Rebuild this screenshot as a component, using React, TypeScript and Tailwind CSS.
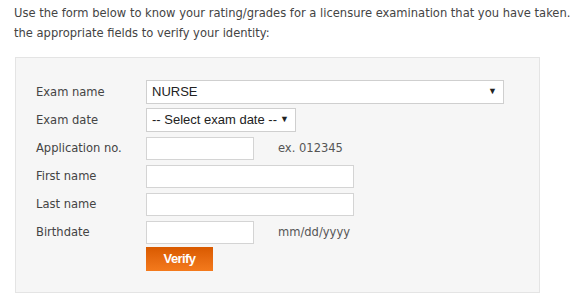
import React from "react";

const Row = ({ label, children }: { label: string; children: React.ReactNode }) => (
  <div className="flex items-center h-[28px]">
    <div className="w-[110px] text-[#444]">{label}</div>
    {children}
  </div>
);

export default function App() {
  return (
    <div className="w-[576px] h-[303px] bg-white overflow-hidden font-['DejaVu_Sans',sans-serif] font-stretch-condensed text-[12.8px] text-[#444]">
      <div className="pl-[14px] pt-[3px] leading-[20px] whitespace-nowrap">
        <div>Use the form below to know your rating/grades for a licensure examination that you have taken.</div>
        <div>the appropriate fields to verify your identity:</div>
      </div>
      <div className="ml-[15px] mt-[14px] w-[525px] h-[236px] bg-[#f6f6f6] border border-[#e4e4e4] pl-[20px] pt-[20px]">
        <Row label="Exam name">
          <div className="w-[358px] h-[24px] bg-white border border-[#cfcfcf] flex items-center justify-between pl-[5px] pr-[6px] text-[13px] text-[#222] font-['Liberation_Sans',sans-serif] font-stretch-normal">
            <span>NURSE</span>
            <span className="text-[9px]">▼</span>
          </div>
        </Row>
        <Row label="Exam date">
          <div className="w-[150px] h-[24px] bg-white border border-[#cfcfcf] flex items-center justify-between pl-[5px] pr-[6px] text-[13px] text-[#222] whitespace-nowrap font-['Liberation_Sans',sans-serif] font-stretch-normal">
            <span>-- Select exam date --</span>
            <span className="text-[9px]">▼</span>
          </div>
        </Row>
        <Row label="Application no.">
          <div className="w-[108px] h-[23px] bg-white border border-[#d4d4d4]" />
          <span className="ml-[24px] text-[#555]">ex. 012345</span>
        </Row>
        <Row label="First name">
          <div className="w-[208px] h-[23px] bg-white border border-[#d4d4d4]" />
        </Row>
        <Row label="Last name">
          <div className="w-[208px] h-[23px] bg-white border border-[#d4d4d4]" />
        </Row>
        <Row label="Birthdate">
          <div className="w-[108px] h-[23px] bg-white border border-[#d4d4d4]" />
          <span className="ml-[24px] text-[#555]">mm/dd/yyyy</span>
        </Row>
        <div className="pl-[110px] pt-[1px]">
          <button className="w-[67px] h-[24px] bg-gradient-to-b from-[#d95a00] to-[#f47a1c] text-white text-[13px] font-bold tracking-[-0.6px] font-['Liberation_Sans',sans-serif] font-stretch-normal">
            Verify
          </button>
        </div>
      </div>
    </div>
  );
}
